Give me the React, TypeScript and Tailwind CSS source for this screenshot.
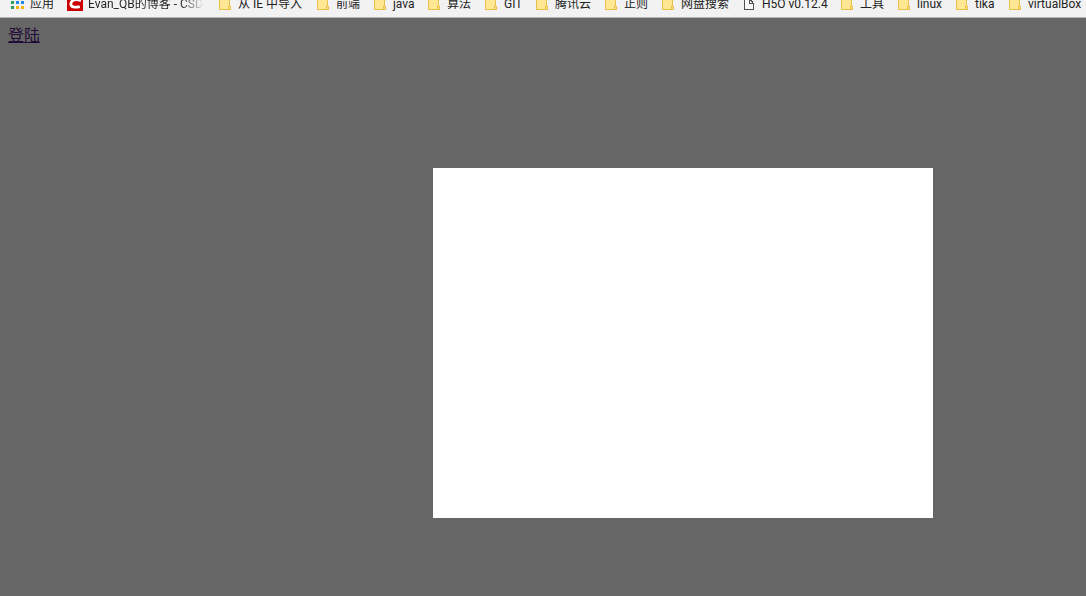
type Kind = "folder" | "page" | "apps" | "csdn";

type Bookmark = { label: string; kind: Kind; width: string };

const bookmarks: Bookmark[] = [
  { label: "应用", kind: "apps", width: "w-[58px]" },
  { label: "Evan_QB的博客 - CSDN", kind: "csdn", width: "w-[150px]" },
  { label: "从 IE 中导入", kind: "folder", width: "w-[98px]" },
  { label: "前端", kind: "folder", width: "w-[57px]" },
  { label: "java", kind: "folder", width: "w-[54px]" },
  { label: "算法", kind: "folder", width: "w-[57px]" },
  { label: "GIT", kind: "folder", width: "w-[51px]" },
  { label: "腾讯云", kind: "folder", width: "w-[69px]" },
  { label: "正则", kind: "folder", width: "w-[57px]" },
  { label: "网盘搜索", kind: "folder", width: "w-[81px]" },
  { label: "H5O v0.12.4", kind: "page", width: "w-[98px]" },
  { label: "工具", kind: "folder", width: "w-[57px]" },
  { label: "linux", kind: "folder", width: "w-[58px]" },
  { label: "tika", kind: "folder", width: "w-[53px]" },
  { label: "virtualBox", kind: "folder", width: "w-[77px]" },
];

function Icon({ kind }: { kind: Kind }) {
  return (
    <svg
      className="size-4 shrink-0"
      viewBox="0 0 16 16"
      shapeRendering="crispEdges"
      aria-hidden="true"
    >
      {kind === "folder" && (
        <>
          <path d="M2 1h11v9h1v4H2z" fill="#e8c04a" />
          <path d="M3 2h9v11H3z" fill="#ffe793" />
          <path d="M11 10h1v3h-1z" fill="#e8c04a" />
          <path d="M12 11h1v2h-1z" fill="#ffe793" />
        </>
      )}
      {kind === "page" && (
        <path
          d="M3.5 2.5h5l4 5v6h-9z M8.5 2.5v5h4"
          fill="#fafafa"
          stroke="#505050"
        />
      )}
      {kind === "apps" && (
        <>
          <path d="M2 0h3v3H2zM7 0h3v3H7zM12 0h3v3h-3z" fill="#ea4335" />
          <path d="M2 5h3v3H2zM2 10h3v3H2z" fill="#2e9e5b" />
          <path d="M7 5h3v3H7zM12 5h3v3h-3z" fill="#1e88f0" />
          <path d="M7 10h3v3H7zM12 10h3v3h-3z" fill="#fbb80f" />
        </>
      )}
      {kind === "csdn" && (
        <g shapeRendering="auto">
          <rect width="16" height="15" fill="#ca0000" />
          <path
            d="M14 4.6C9 3 4.6 3.4 3.9 7.6c-.5 3.8 3.8 4.2 8.9 3"
            fill="none"
            stroke="#fff"
            strokeWidth="2.8"
          />
        </g>
      )}
    </svg>
  );
}

export default function App() {
  return (
    <div className="flex min-h-screen flex-col bg-[#666666]">
      <nav
        aria-label="书签"
        className="flex h-[18px] items-end overflow-hidden border-b border-[#b2b2b2] bg-[#f2f2f2] pb-[5px] pl-[9px] font-['Roboto','Noto_Sans_CJK_SC',sans-serif] text-xs leading-4 text-[#222222]"
      >
        {bookmarks.map(({ label, kind, width }) => (
          <a
            key={label}
            href="#"
            className={`flex shrink-0 items-center gap-[5px] whitespace-nowrap ${width}`}
          >
            <Icon kind={kind} />
            {kind === "csdn" ? (
              <span className="w-[116px] overflow-hidden bg-linear-to-r from-[#222222] from-80% to-transparent bg-clip-text text-transparent">
                {label}
              </span>
            ) : (
              <span>{label}</span>
            )}
          </a>
        ))}
      </nav>
      <main className="relative flex-1 p-2 font-['Liberation_Serif','Noto_Sans_CJK_SC',serif] text-base leading-5">
        <a href="#" className="text-[#220b36] underline">
          登陆
        </a>
        <div
          role="dialog"
          aria-label="登陆"
          className="absolute top-[150px] left-[433px] h-[350px] w-[500px] bg-white"
        />
      </main>
    </div>
  );
}
